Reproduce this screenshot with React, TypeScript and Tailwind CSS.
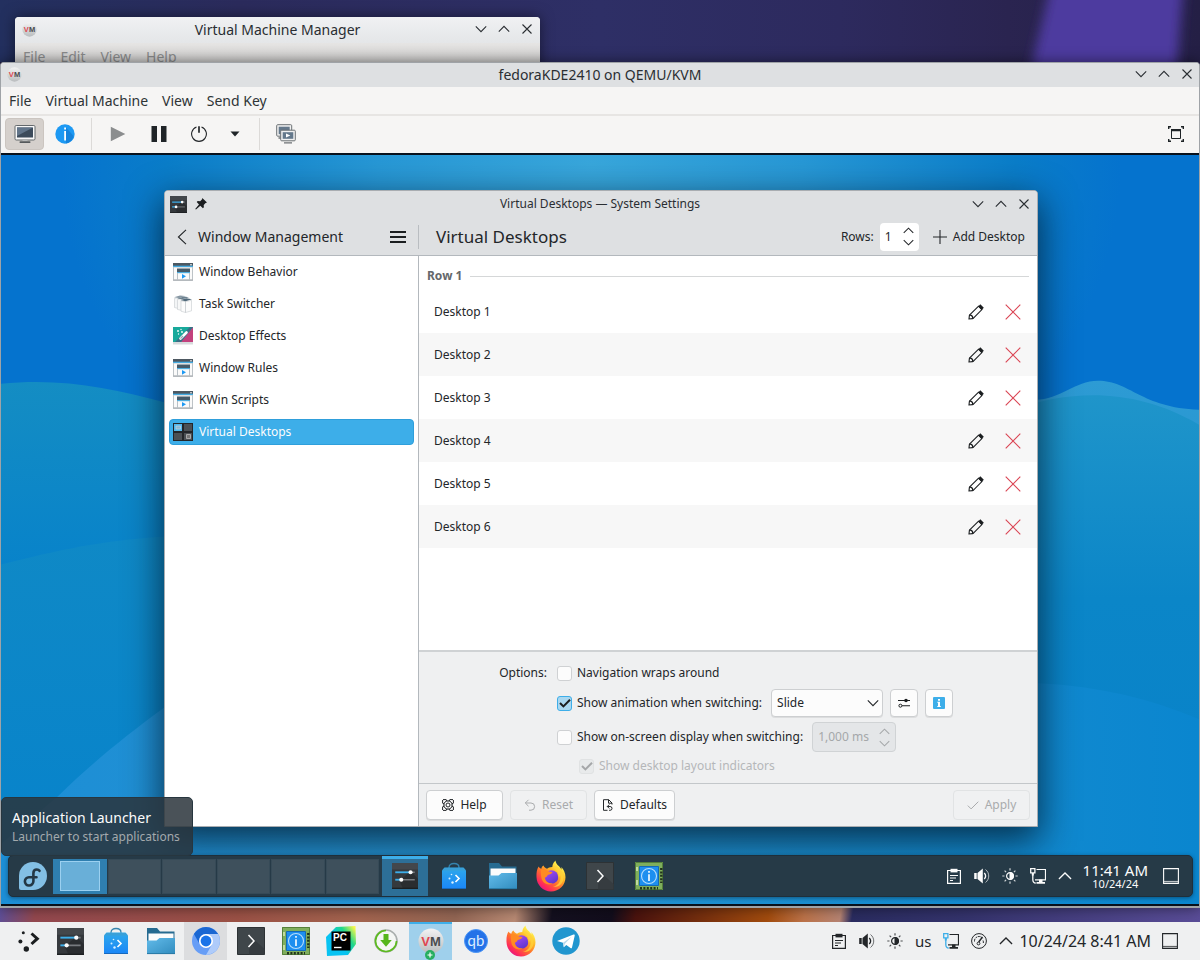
import React, { useId, useState } from "react";

type IconProps = { className?: string };

/* ---------- Window and action icons ---------- */

const Down = ({ className = "size-3" }: IconProps) => (
  <svg viewBox="0 0 12 12" className={className} fill="none" stroke="currentColor" strokeWidth="1.1" aria-hidden="true">
    <path d="M.8 3.4 6 8.6l5.2-5.2" />
  </svg>
);
const Up = ({ className = "size-3" }: IconProps) => (
  <svg viewBox="0 0 12 12" className={className} fill="none" stroke="currentColor" strokeWidth="1.1" aria-hidden="true">
    <path d="M.8 8.6 6 3.4l5.2 5.2" />
  </svg>
);
const Cross = ({ className = "size-3" }: IconProps) => (
  <svg viewBox="0 0 12 12" className={className} fill="none" stroke="currentColor" strokeWidth="1.1" aria-hidden="true">
    <path d="m1.500 1.500 9 9m0-9-9 9" />
  </svg>
);
const Back = () => (
  <svg viewBox="0 0 10 16" className="h-4 w-[10px]" fill="none" stroke="currentColor" strokeWidth="1.1" aria-hidden="true">
    <path d="M9 .8 1.400 8 9 15.200" />
  </svg>
);
const Burger = () => (
  <svg viewBox="0 0 16 14" className="h-[14px] w-4" aria-hidden="true">
    <path d="M0 2h16M0 7h16M0 12h16" stroke="currentColor" strokeWidth="1.9" />
  </svg>
);
const Plus = () => (
  <svg viewBox="0 0 14 14" className="size-[14px]" aria-hidden="true">
    <path d="M7 0v14M0 7h14" stroke="currentColor" strokeWidth="1.1" />
  </svg>
);
const Pin = () => (
  <svg viewBox="0 0 12 12" className="size-3" aria-hidden="true">
    <path d="M7.3 0 12 4.600l-1.400.300-1.900 2 .200 2.400-1 1L5.300 7.700 1 11.600l-.8-.500L4 6.500 1.700 4l1-1 2.500.200 1.900-1.900z" fill="#1b1e20" />
  </svg>
);
const Pencil = () => (
  <svg viewBox="0 0 16 16" className="size-4" aria-hidden="true">
    <path d="M10.600 2.200 1.700 10.800a1 1 0 0 0-.3.600L1 15l3.600-.4a1 1 0 0 0 .6-.3l8.700-8.700z" fill="none" stroke="#1b1e20" strokeWidth="1.100" />
    <path d="M10.200 2.400 12.300.300l3.500 3.500-2.100 2.100z" fill="#1b1e20" />
    <path d="M1.500 11.200c2.100-.4 3.600 1.200 3.200 3.300" fill="none" stroke="#1b1e20" strokeWidth="1.400" />
  </svg>
);
const Delete = () => (
  <svg viewBox="0 0 16 16" className="size-4" fill="none" stroke="#da4453" strokeWidth="1.100" aria-hidden="true">
    <path d="m.7.7 14.600 14.600m0-14.600L.7 15.300" />
  </svg>
);
const Sliders = () => (
  <svg viewBox="0 0 12 12" className="size-3" aria-hidden="true">
    <path d="M0 3.500h12M4 8.700h8" stroke="#1b1e20" strokeWidth="1.100" />
    <circle cx="8" cy="3.500" r="1.800" fill="#1b1e20" />
    <circle cx="2.400" cy="8.700" r="1.500" fill="none" stroke="#1b1e20" strokeWidth="1" />
  </svg>
);
const InfoSquare = () => (
  <svg viewBox="0 0 12 12" className="size-3" aria-hidden="true">
    <rect width="12" height="12" rx="1" fill="#3daee9" />
    <path d="M5 2h2v1.700H5zM4.300 4.800H7V9h.8v1H4.300V9H5V5.800h-.7z" fill="#fff" />
  </svg>
);
const HelpIcon = () => (
  <svg viewBox="0 0 12 12" className="size-3" fill="none" stroke="currentColor" aria-hidden="true">
    <circle cx="6" cy="6" r="4.200" />
    <circle cx="6" cy="6" r="2" />
    <path d="M1 .6h3.200L5 2.500M11 .6H7.800L7 2.500M1 11.400h3.200L5 9.500M11 11.400H7.800L7 9.500M.6 1v3.200L2.500 5M.6 11V7.800L2.500 7M11.400 1v3.200L9.500 5M11.400 11V7.800L9.500 7" />
  </svg>
);
const Undo = () => (
  <svg viewBox="0 0 12 12" className="size-3" fill="none" stroke="currentColor" aria-hidden="true">
    <path d="M4.500.8 1.300 4l3.200 3.200M1.300 4H7a3.600 3.600 0 0 1 0 7.200H5" />
  </svg>
);
const DefaultsIcon = () => (
  <svg viewBox="0 0 12 12" className="size-3" fill="none" stroke="currentColor" aria-hidden="true">
    <path d="M5.500 11.300H1.500V.7h5.200l3.300 3.300v1.500M6.500.7v3.500H10" />
    <path d="m7.300 5.500-2 2 2 2M5.300 7.500h2.800a1.900 1.900 0 0 1 0 3.800h-1" />
  </svg>
);
const Tick = ({ className = "size-3" }: IconProps) => (
  <svg viewBox="0 0 12 12" className={className} fill="none" stroke="currentColor" aria-hidden="true">
    <path d="m.8 6.600 3.300 3.300L11.300 2.700" />
  </svg>
);

/* ---------- Virtual machine toolbar icons ---------- */

const Monitor = () => (
  <svg viewBox="0 0 22 20" className="h-5 w-[22px]" aria-hidden="true">
    <rect x="1" y="1.500" width="20" height="14.500" rx="1.200" fill="#f7f7f7" stroke="#63686b" />
    <rect x="3" y="3.500" width="16" height="10" fill="#3c4b5b" />
    <path d="M3 3.500h16L3 12z" fill="#62758a" />
    <path d="M8.500 16h5v1.500h-5z" fill="#b7b9ba" />
    <rect x="5.500" y="17.300" width="11" height="1.700" rx=".8" fill="#55595c" />
  </svg>
);
const InfoCircle = () => (
  <svg viewBox="0 0 20 20" className="size-5" aria-hidden="true">
    <circle cx="10" cy="10" r="9.700" fill="#1d99f3" />
    <path d="m11 3.500 7.500 8.500A9.700 9.700 0 0 1 11 19.600z" fill="#1683dc" />
    <path d="M9.200 3.500h1.800v2H9.200zM9.200 7h1.800v9.500H9.200z" fill="#fff" />
  </svg>
);
const Play = () => (
  <svg viewBox="0 0 16 16" className="size-4" aria-hidden="true">
    <path d="M.8.8 15.300 8 .8 15.200z" fill="#8b8d8e" />
  </svg>
);
const Pause = () => (
  <svg viewBox="0 0 16 16" className="size-4" aria-hidden="true">
    <path d="M.5 0h5.500v16H.5zM10 0h5.500v16H10z" fill="#1f2427" />
  </svg>
);
const Power = () => (
  <svg viewBox="0 0 16 16" className="size-4" fill="none" stroke="#232629" aria-hidden="true">
    <path d="M5.500 1A7.400 7.400 0 1 0 10.500 1" strokeWidth="1.100" />
    <path d="M8 .2v6.500" strokeWidth="1.700" />
  </svg>
);
const Screens = () => (
  <svg viewBox="0 0 20 20" className="size-5" aria-hidden="true">
    <rect x=".7" y=".7" width="15" height="11.500" rx="1" fill="#f1f1f1" stroke="#6c7174" />
    <rect x="2.700" y="2.700" width="11" height="7.500" fill="#64788b" />
    <path d="M2.500 14h4" stroke="#6c7174" strokeWidth="1.400" />
    <rect x="4.700" y="6.200" width="14.600" height="10.600" rx="1" fill="#f1f1f1" stroke="#6c7174" />
    <rect x="6.700" y="8.200" width="10.600" height="6.600" fill="#64788b" />
    <path d="m10 9.400 4.300 2.100L10 13.600z" fill="#fff" />
    <path d="M8 18.900h8" stroke="#6c7174" strokeWidth="1.300" />
  </svg>
);
const Fullscreen = () => (
  <svg viewBox="0 0 16 16" className="size-4" fill="none" stroke="#1f2427" aria-hidden="true">
    <path d="M.7 3V.7H3M13 .7h2.300V3M15.300 13v2.300H13M3 15.300H.7V13" strokeWidth="1.400" />
    <path d="M3.500 4v8.500h9V4" />
    <path d="M3 4.200h10" strokeWidth="2.200" />
  </svg>
);

/* ---------- Sidebar icons ---------- */

const WindowRulesIcon = () => (
  <svg viewBox="0 0 20 18" className="h-[18px] w-5" aria-hidden="true">
    <path d="M.5 4h19v13.500H.5z" fill="#fafafa" stroke="#bdc3c7" />
    <path d="M0 17h20" stroke="#b0b5b9" strokeWidth="1.400" />
    <path d="M0 0h20v3.500H0z" fill="#4d5861" />
    <path d="M0 3.300h20" stroke="#3daee9" strokeWidth="1.200" />
    <circle cx="18" cy="1.700" r=".8" fill="#fff" />
    <path d="M4 5.500h13v4H4z" fill="#455a69" />
    <path d="M4 9.700h13" stroke="#3daee9" />
    <path d="M4.500 10v7M16.500 10v7" stroke="#b8c0c6" />
    <path d="m9 11 4 2.300-4 2.500z" fill="#1d99f3" />
  </svg>
);
const TaskSwitcherIcon = () => (
  <svg viewBox="0 0 20 18" className="h-[18px] w-5" aria-hidden="true">
    <path d="M1.500 3.500 7 2v12l-5.500-1.500z" fill="#f3f5f6" stroke="#c6cbce" strokeWidth=".6" />
    <path d="m1 2.300 6-1.800 5 .6-6 1.800z" fill="#8797a3" />
    <path d="M4.500 4.500 12 3v13l-7.500-1.500z" fill="#f7f8f8" stroke="#c6cbce" strokeWidth=".6" />
    <path d="m4 3.500 7-2 5 .8-7 2z" fill="#6d8290" />
    <path d="m8 5.800 4.500.8v10.900L8 16.200zM12.500 6.600l6-1.300v10.500l-6 1.700z" fill="#fcfcfc" stroke="#c6cbce" strokeWidth=".6" />
    <path d="m7.500 5 6-1.800 5.500 1-6.500 2.100z" fill="#50697a" />
  </svg>
);
const EffectsIcon = () => (
  <svg viewBox="0 0 20 18" className="h-[18px] w-5" aria-hidden="true">
    <path d="M0 0h20v15H0z" fill="#18a99b" />
    <path d="M20 0v15H8z" fill="#c3417e" />
    <path d="m17 0 3 0L8 15H2z" fill="#3a6f86" />
    <path d="M0 15h20v2.500H0z" fill="#d7dadc" />
    <path d="m7.500 11.500 6-6" stroke="#fff" strokeWidth="2.600" strokeLinecap="round" />
    <path d="m7.500 11.500 2.500-2.500" stroke="#9ab" strokeWidth="1.300" />
    <g fill="#fff">
      <circle cx="5" cy="4" r=".9" />
      <circle cx="8" cy="2.500" r=".7" />
      <circle cx="9" cy="5" r=".9" />
      <circle cx="5.500" cy="7" r=".7" />
    </g>
  </svg>
);
const DesktopsIcon = () => (
  <svg viewBox="0 0 20 18" className="h-[18px] w-5" aria-hidden="true">
    <path d="M0 0h20v18H0z" fill="#232629" />
    <path d="M1 1h8v7H1z" fill="#54b8ec" />
    <path d="M3 3h4.500v3H3z" fill="#8fb8d2" stroke="#b5d5e8" strokeWidth=".7" />
    <path d="M11 1h8v7h-8zM1 10h8v7H1zM11 10h8v7h-8z" fill="#4b5054" />
    <path d="M13.500 11.500h4v4h-4z" fill="#777" stroke="#bbb" strokeWidth=".8" />
  </svg>
);

/* ---------- Application icons ---------- */

const SettingsIcon = ({ className = "size-7" }: IconProps) => (
  <svg viewBox="0 0 28 28" className={className} aria-hidden="true">
    <path d="M0 0h28v28H0z" fill="#35393d" />
    <path d="M0 0h28v7H0z" fill="#43474b" />
    <path d="m20 9 8 8v11H12L8 19z" fill="#2a2d30" />
    <path d="M0 27.300h28" stroke="#1c1f21" strokeWidth="1.400" />
    <path d="M3.500 10h16" stroke="#3daee9" strokeWidth="2" />
    <path d="M20 10h4.500M10 18h14.500" stroke="#777b7f" strokeWidth="1.600" />
    <path d="M3.500 18h6" stroke="#3daee9" strokeWidth="2" />
    <circle cx="20" cy="10" r="2.200" fill="#fcfcfc" />
    <circle cx="10" cy="18" r="2.200" fill="#fcfcfc" />
  </svg>
);
const DiscoverIcon = () => {
  const id = useId();
  return (
    <svg viewBox="0 0 28 28" className="size-7" aria-hidden="true">
      <linearGradient id={id} x1="0" x2="0" y1="0" y2="1">
        <stop stopColor="#2fa9ea" />
        <stop offset="1" stopColor="#1a86f8" />
      </linearGradient>
      <path d="M9 8V5.500C9 3 11 1.500 14 1.500s5 1.500 5 4V8" fill="none" stroke="#3584ae" strokeWidth="1.300" />
      <path d="M4.500 5.500h19L26 8.500V27H2V8.500z" fill={`url(#${id})`} />
      <path d="M2 8.500 4.500 6h19L26 8.500z" fill="#39a0d8" />
      <path d="M2 26.500h24" stroke="#1769bd" />
      <path d="m15.500 13 3.500 3.500-3.500 3.500" fill="none" stroke="#fff" strokeWidth="1.600" />
      <g fill="#d7f0ff">
        <circle cx="9.500" cy="16.500" r="1" />
        <circle cx="12.500" cy="20.500" r="1.200" />
        <circle cx="11.500" cy="12.500" r=".8" />
      </g>
    </svg>
  );
};
const FolderIcon = () => {
  const id = useId();
  return (
    <svg viewBox="0 0 28 28" className="size-7" aria-hidden="true">
      <linearGradient id={id} x1="0" x2="1" y1="0" y2="1">
        <stop stopColor="#62bbea" />
        <stop offset="1" stopColor="#318cbe" />
      </linearGradient>
      <path d="M0 1h10l3 3.500h14.500V16H0z" fill="#266b91" />
      <path d="M1.500 6.500h25V15h-25z" fill="#fcfcfc" />
      <path d="M0 13.500h9.500l3-2.500H28v16H0z" fill={`url(#${id})`} />
      <path d="M0 26.600h28" stroke="#297aa5" />
    </svg>
  );
};
const TerminalIcon = () => (
  <svg viewBox="0 0 28 28" className="size-7" aria-hidden="true">
    <path d="M.5.5h27v27H.5z" fill="#3f464a" stroke="#2d3235" />
    <path d="m12 8 15.500 14v5.500H12V20l5-6z" fill="#363c40" />
    <path d="m11.500 8 5.500 6-5.500 6" fill="none" stroke="#fcfcfc" strokeWidth="1.500" />
  </svg>
);
const ChipIcon = () => (
  <svg viewBox="0 0 28 28" className="size-7" aria-hidden="true">
    <path d="M0 0h28v28H0z" fill="#7fae5d" />
    <path d="M.5.5h27v27H.5z" fill="none" stroke="#55803a" />
    <path d="M26.300 6v15M5 26.300h18" stroke="#22331c" strokeWidth="2.400" strokeDasharray="2 1.400" />
    <path d="M2 5v4M2 18v5" stroke="#d9e8b8" strokeWidth="1.500" />
    <path d="M4.500 4.500h19v19h-19z" fill="#1d8ff0" stroke="#1569b6" />
    <circle cx="14" cy="14" r="7.500" fill="none" stroke="#b6ddfb" strokeWidth="1.100" />
    <path d="M13.200 9h1.600v1.800h-1.600zM13.200 12.200h1.600v6.800h-1.600z" fill="#fff" />
  </svg>
);
const FirefoxIcon = () => {
  const id = useId();
  return (
    <svg viewBox="0 0 30 32" className="h-8 w-[30px]" aria-hidden="true">
      <linearGradient id={id + "a"} x1=".85" x2=".2" y1=".1" y2=".95">
        <stop offset=".05" stopColor="#fff44f" />
        <stop offset=".35" stopColor="#ffb325" />
        <stop offset=".6" stopColor="#ff6c2f" />
        <stop offset=".85" stopColor="#ff2c58" />
        <stop offset="1" stopColor="#e31587" />
      </linearGradient>
      <linearGradient id={id + "b"} x1=".2" x2=".8" y1="0" y2="1">
        <stop stopColor="#a64af5" />
        <stop offset="1" stopColor="#5b35c9" />
      </linearGradient>
      <path d="M19.500.5c-2.500 2-3.200 5-3.200 6.500-2.500.2-4 .8-5.200 1.800C9.500 8.300 8.200 7.200 7.500 5.500 5.800 6.500 5.400 8 5.400 8.800 3.500 8.600 2.600 6.500 2.600 6.500.8 9 .3 13 .5 17 .7 25 7 31.500 15 31.500c8.300 0 14.500-6.500 14.500-14.200 0-4.300-1.700-7.600-4.300-10.200.3 1 .3 2.200.3 2.700C24.200 6 19.800 5 19.500.5z" fill={`url(#${id}a)`} />
      <circle cx="15.500" cy="17" r="6.800" fill={`url(#${id}b)`} />
      <path d="M5.500 9c2.500 0 4.500.5 6 1.500 1 1.500 3.500 1 5 1.700-.5 1.800-3 2-4.200 2.500-1.300.6-1 2.300-3.500 3 .8 4.300 4.500 6.300 8 5.500-4 2.800-10 .5-11.300-5C4.800 14.500 4.500 11 5.500 9z" fill="#ff8b22" />
      <path d="M17 7.500c4 1.500 6.500 6 5.300 10.500 1.200-1 1.700-2.500 1.700-3.500 2 5-1 11-7 12.500 7 .5 10.500-4.500 10.500-9.500 0-5.500-4.500-9.500-7-11z" fill="#ffd23a" opacity=".8" />
    </svg>
  );
};
const ChromiumIcon = () => (
  <svg viewBox="0 0 28 28" className="size-7" aria-hidden="true">
    <circle cx="14" cy="14" r="14" fill="#669df6" />
    <path d="M14 7h12.100A14 14 0 0 1 14 28l6-10.500z" fill="#aecbfa" />
    <path d="M1.900 7A14 14 0 0 1 26.100 7H14a7 7 0 0 0-6.100 10.500z" fill="#1a67d2" />
    <circle cx="14" cy="14" r="7" fill="#fff" />
    <circle cx="14" cy="14" r="5.400" fill="#1a73e8" />
  </svg>
);
const PyCharmIcon = () => {
  const id = useId();
  return (
    <svg viewBox="0 0 30 30" className="size-[30px]" aria-hidden="true">
      <linearGradient id={id} x1="0" x2="1" y1=".7" y2="0">
        <stop offset=".35" stopColor="#07c3f2" />
        <stop offset=".65" stopColor="#21d789" />
        <stop offset=".95" stopColor="#fcf84a" />
      </linearGradient>
      <path d="M10 1 29.500 0 30 18l-8 11L1 30 0 11z" fill={`url(#${id})`} />
      <path d="M5.500 5.500h19v19h-19z" fill="#000" />
      <text x="7" y="15" fill="#fff" fontFamily="Liberation Sans, sans-serif" fontWeight="700" fontSize="10">PC</text>
      <path d="M8 20.800h7.500v1.400H8z" fill="#fff" />
    </svg>
  );
};
const DownloadIcon = () => (
  <svg viewBox="0 0 24 24" className="size-6" aria-hidden="true">
    <circle cx="12" cy="12" r="11" fill="#f4f6f4" stroke="#a9aead" strokeWidth="1.600" />
    <path d="M12 1.500A10.500 10.500 0 1 0 22.500 12" fill="none" stroke="#5cbb1f" strokeWidth="1.700" />
    <path d="M9.500 5h5v6h3.300L12 17.800 6.200 11h3.300z" fill="#55b51c" />
  </svg>
);
const VmmIcon = ({ className = "size-4" }: IconProps) => {
  const id = useId();
  return (
    <svg viewBox="0 0 26 26" className={className} aria-hidden="true">
      <linearGradient id={id} x1="0" x2="0" y1="0" y2="1">
        <stop stopColor="#f3f3f3" />
        <stop offset="1" stopColor="#b9bcbe" />
      </linearGradient>
      <circle cx="13" cy="13" r="12.500" fill={`url(#${id})`} />
      <text x="13" y="17.500" textAnchor="middle" fontFamily="Liberation Sans, sans-serif" fontWeight="700" fontSize="13">
        <tspan fill="#e0454f">V</tspan>
        <tspan fill="#4a4c4e">M</tspan>
      </text>
    </svg>
  );
};
const QbIcon = () => (
  <svg viewBox="0 0 24 24" className="size-6" aria-hidden="true">
    <circle cx="12" cy="12" r="11.500" fill="#2472e8" stroke="#4d97f5" />
    <text x="12" y="16.500" textAnchor="middle" fill="#dcecff" fontFamily="Lato, Noto Sans, sans-serif" fontSize="15">qb</text>
  </svg>
);
const TelegramIcon = () => (
  <svg viewBox="0 0 28 28" className="size-7" aria-hidden="true">
    <circle cx="14" cy="14" r="13.700" fill="#2196cf" />
    <path d="M5 14 21.500 7.500c.8-.3 1.400.2 1.200 1.200L20 20.500c-.2.900-.8 1-1.500.6L14.300 18l-2.500 2.300-.8-4.500z" fill="#fff" />
    <path d="m11 15.800 8.500-6.100-6.600 7-1.100 3.600z" fill="#b9d9ec" />
  </svg>
);
const FedoraIcon = () => (
  <svg viewBox="0 0 28 28" className="size-7" aria-hidden="true">
    <path d="M14 0a14 14 0 1 1 0 28H2a2 2 0 0 1-2-2V14A14 14 0 0 1 14 0z" fill="#83bfe4" />
    <path d="M20.500 8.800c-.6-.9-1.500-1.300-2.600-1.300-2.200 0-3.500 1.500-3.500 3.700v8a4.300 4.300 0 0 1-4.400 4.300 4 4 0 0 1-4.100-4.200 4 4 0 0 1 4.100-4h7.500" fill="none" stroke="#243744" strokeWidth="2.600" strokeLinecap="round" />
  </svg>
);
const PlasmaIcon = () => (
  <svg viewBox="0 0 22 22" className="size-[22px]" aria-hidden="true">
    <path d="m13.500 3.500 5.800 5.200-5.800 5.300" fill="none" stroke="#1b1e20" strokeWidth="3" />
    <circle cx="5.300" cy="2.800" r="1.500" fill="#1b1e20" />
    <circle cx="2.400" cy="11.500" r="2" fill="#1b1e20" />
    <circle cx="8.300" cy="19" r="2.700" fill="#1b1e20" />
  </svg>
);

/* ---------- Tray icons ---------- */

const Clipboard = () => (
  <svg viewBox="0 0 16 16" className="size-4" fill="none" stroke="currentColor" aria-hidden="true">
    <path d="M1.600 2.500h12.800v12.800H1.600z" strokeWidth="1.200" />
    <path d="M4.500 2.600h7" strokeWidth="3.600" />
    <path d="M4 7.500h8M4 10h6M4 12.500h3" strokeWidth="1.200" />
  </svg>
);
const Volume = () => (
  <svg viewBox="0 0 16 16" className="size-4" fill="none" stroke="currentColor" aria-hidden="true">
    <path d="M.2 5h2.500v6H.2zM3.500 5 8.800.5v15L3.500 11z" fill="currentColor" stroke="none" />
    <path d="M10.300 5c1.600 1.800 1.600 4.200 0 6" strokeWidth="1.300" />
    <path d="M11.500 1.500c4.300 3.300 4.300 9.700 0 13" opacity=".65" />
  </svg>
);
const Brightness = () => (
  <svg viewBox="0 0 16 16" className="size-4" fill="none" stroke="currentColor" aria-hidden="true">
    <circle cx="8" cy="8" r="3.400" strokeWidth="1.200" />
    <path d="M8 4.600a3.400 3.400 0 0 1 0 6.800z" fill="currentColor" />
    <path d="M8 .3v2.200M8 13.500v2.200M.3 8h2.200M13.500 8h2.200M2.600 2.600l1.500 1.500M11.900 11.900l1.500 1.500M13.400 2.600l-1.500 1.500M4.100 11.900l-1.500 1.500" strokeWidth="1.200" opacity=".8" />
  </svg>
);
const Network = ({ accent }: { accent: string }) => (
  <svg viewBox="0 0 16 16" className="size-4" fill="none" stroke="currentColor" aria-hidden="true">
    <path d="M6.500 1.500h9v10.300H5" strokeWidth="1.200" />
    <path d="M9 11.500h3.500V14H15v1.700H6.500V14H9z" fill="currentColor" stroke="none" />
    <path d="M.7.7h4.200v4.200H.7zM2.800 5v6.500c0 2 1 3.500 3 3.700" stroke={accent} strokeWidth="1.300" />
    <path d="M2.800 7.500V5" stroke={accent} strokeWidth="2" />
  </svg>
);
const Gauge = () => (
  <svg viewBox="0 0 16 16" className="size-4" fill="none" stroke="currentColor" aria-hidden="true">
    <circle cx="8" cy="8" r="7.400" />
    <path d="M3.500 8.500a4.500 4.500 0 0 1 8-3.300M12 7.500c.5 1 .5 1.800.3 2.500" strokeDasharray="2.500 .8" />
    <path d="m11.500 4-3.800 5" strokeWidth="1.400" />
    <circle cx="7.500" cy="10.500" r="1.400" />
  </svg>
);
const ShowDesktop = () => (
  <svg viewBox="0 0 16 16" className="size-4" fill="none" stroke="currentColor" aria-hidden="true">
    <path d="M.6.6h14.800v14.800H.6z" strokeWidth="1.100" />
    <path d="M1 13.500h14" strokeWidth="1.200" opacity=".7" />
  </svg>
);

/* ---------- Windows ---------- */

function TitleBar({ title, left, className }: { title: string; left: React.ReactNode; className: string }) {
  return (
    <header className={"grid shrink-0 grid-cols-[1fr_auto_1fr] items-center text-[#2a2e32] " + className}>
      <div className="flex items-center gap-2">{left}</div>
      <h1 className="whitespace-nowrap">{title}</h1>
      <div className="flex items-center justify-end gap-[11px]">
        <button type="button" aria-label="Minimize"><Down /></button>
        <button type="button" aria-label="Maximize"><Up /></button>
        <button type="button" aria-label="Close"><Cross /></button>
      </div>
    </header>
  );
}

function ManagerWindow() {
  return (
    <section className="absolute left-[15px] top-[17px] h-[60px] w-[525px] overflow-hidden rounded-t bg-[#e6e4e2] shadow-[0_0_14px_rgba(0,0,0,0.5)]">
      <TitleBar title="Virtual Machine Manager" left={<VmmIcon className="size-[15px]" />} className="h-[26px] bg-linear-to-b from-[#f0f1f3] to-[#e4e6e8] px-[7px] pb-[2px] text-[14px]" />
      <nav className="flex gap-[15px] bg-linear-to-b from-[#e6e5e4] to-[#b4b3b2] px-2 pb-4 pt-1 text-[14px] leading-5 text-[#8a8b8c]">
        {["File", "Edit", "View", "Help"].map((m) => (
          <button type="button" key={m}>{m}</button>
        ))}
      </nav>
    </section>
  );
}

function MachineToolbar() {
  return (
    <div className="flex h-[39px] shrink-0 items-center border-t-2 border-[#e7e5e3] bg-[#f6f5f4] pb-[2px] pl-1 pr-[15px]">
      <button type="button" aria-label="Console" aria-pressed="true" className="flex h-8 w-[39px] items-center justify-center rounded border border-[#cbc5c0] bg-[#d5d0cc]"><Monitor /></button>
      <button type="button" aria-label="Details" className="flex w-[41px] justify-center"><InfoCircle /></button>
      <span className="ml-[6px] h-8 w-px bg-[#dcdad8]" />
      <button type="button" aria-label="Run" className="ml-[6px] flex w-10 justify-center"><Play /></button>
      <button type="button" aria-label="Pause" className="flex w-[41px] justify-center"><Pause /></button>
      <button type="button" aria-label="Shut down" className="flex w-10 justify-center"><Power /></button>
      <button type="button" aria-label="Shut down options" className="flex w-8 justify-center">
        <svg viewBox="0 0 10 6" className="h-[6px] w-[10px]" aria-hidden="true"><path d="M.5.5h9L5 5.500z" fill="#1f2427" /></svg>
      </button>
      <span className="ml-2 h-8 w-px bg-[#dcdad8]" />
      <button type="button" aria-label="Manage snapshots" className="ml-[6px] flex w-10 justify-center"><Screens /></button>
      <button type="button" aria-label="Full screen" className="ml-auto"><Fullscreen /></button>
    </div>
  );
}

function GuestWallpaper() {
  return (
    <svg viewBox="0 0 1198 750" preserveAspectRatio="none" className="absolute inset-0 size-full" aria-hidden="true">
      <defs>
        <radialGradient id="glow" gradientUnits="userSpaceOnUse" cx="0" cy="0" r="1" gradientTransform="translate(590 10) scale(530 420)">
          <stop stopColor="#38a7dc" />
          <stop offset=".4" stopColor="#2798d6" />
          <stop offset=".8" stopColor="#0a7dc9" />
          <stop offset="1" stopColor="#0573ce" />
        </radialGradient>
        <linearGradient id="hillLeft" x1="0" x2="0" y1="0" y2="1">
          <stop stopColor="#148dc3" />
          <stop offset=".35" stopColor="#0883ca" />
          <stop offset="1" stopColor="#0681cd" />
        </linearGradient>
        <linearGradient id="hillBack" x1="0" x2="0" y1="0" y2="1">
          <stop stopColor="#2d9bd4" />
          <stop offset="1" stopColor="#1f8fcd" />
        </linearGradient>
        <linearGradient id="hillMid" x1="0" x2="0" y1="0" y2="1">
          <stop stopColor="#1f95ca" />
          <stop offset=".4" stopColor="#0b86c8" />
          <stop offset="1" stopColor="#0780ca" />
        </linearGradient>
        <linearGradient id="hillLow" x1="0" x2="0" y1="0" y2="1">
          <stop stopColor="#0f89c6" />
          <stop offset="1" stopColor="#0682cc" />
        </linearGradient>
        <linearGradient id="hillFront" x1="0" x2="1" y1="0" y2="0">
          <stop stopColor="#1c8ed6" />
          <stop offset=".4" stopColor="#2793d0" />
          <stop offset="1" stopColor="#0a86cf" />
        </linearGradient>
      </defs>
      <path d="M0 0h1198v750H0z" fill="url(#glow)" />
      <path d="M0 229C60 223 110 233 165 248L600 320V750H0z" fill="url(#hillLeft)" />
      <path d="M600 235H1000C1050 262 1065 226 1097 226S1140 253 1198 255V450H600z" fill="url(#hillBack)" />
      <path d="M600 260H1000C1060 235 1130 230 1198 270V750H600z" fill="url(#hillMid)" />
      <path d="M0 410C60 395 100 386 165 382H400V750H0z" fill="url(#hillLow)" />
      <path d="M57 642C90 610 120 585 165 552L500 520H900L1037 529C1100 532 1150 545 1198 565V750H0V690z" fill="url(#hillFront)" />
    </svg>
  );
}

const modules = [
  { name: "Window Behavior", icon: <WindowRulesIcon /> },
  { name: "Task Switcher", icon: <TaskSwitcherIcon /> },
  { name: "Desktop Effects", icon: <EffectsIcon /> },
  { name: "Window Rules", icon: <WindowRulesIcon /> },
  { name: "KWin Scripts", icon: <WindowRulesIcon /> },
  { name: "Virtual Desktops", icon: <DesktopsIcon /> },
];

function CheckBox({ label, defaultChecked = false, disabled = false }: { label: string; defaultChecked?: boolean; disabled?: boolean }) {
  return (
    <label className={"flex items-center gap-[5px] whitespace-nowrap " + (disabled ? "text-[#b5b7b9]" : "")}>
      <span className="grid size-[15px] place-items-center">
        <input
          type="checkbox"
          defaultChecked={defaultChecked}
          disabled={disabled}
          className="peer col-start-1 row-start-1 size-[15px] appearance-none rounded-[3px] border border-[#cfd1d3] bg-[#fcfcfc] checked:border-[#3daee9] checked:bg-[#a9d7f0] disabled:border-[#e0e2e3] disabled:bg-[#e8eaeb]"
        />
        <svg viewBox="0 0 12 12" className="pointer-events-none col-start-1 row-start-1 hidden size-3 peer-checked:block" fill="none" stroke={disabled ? "#a5a7a9" : "#1b1e20"} strokeWidth="2" aria-hidden="true">
          <path d="m1 6 3.400 3.400L11 2.700" />
        </svg>
      </span>
      {label}
    </label>
  );
}

function SpinArrows({ disabled = false }: { disabled?: boolean }) {
  return (
    <span className="flex flex-col gap-[1px]">
      <button type="button" aria-label="Increase" disabled={disabled}><Up className="size-[11px]" /></button>
      <button type="button" aria-label="Decrease" disabled={disabled}><Down className="size-[11px]" /></button>
    </span>
  );
}

const squareButton = "flex h-7 w-7 items-center justify-center rounded border border-[#cdcfd1] bg-[#fcfcfc] shadow-[0_1px_0_rgba(0,0,0,0.08)]";
const pushButton = "flex h-[30px] items-center justify-center gap-[6px] rounded border";
const enabledButton = " border-[#cdcfd1] bg-[#fcfcfc] shadow-[0_1px_0_rgba(0,0,0,0.08)]";
const disabledButton = " border-[#e1e3e4] bg-[#f0f1f2] text-[#a9abad]";

function SettingsWindow() {
  const [rows, setRows] = useState("1");
  return (
    <section className="absolute bottom-[77px] left-[163px] right-[161px] top-[35px] flex flex-col overflow-hidden rounded-t border border-[#a9adb1] bg-[#eff0f1] text-[12px] leading-[18px] text-[#232629] shadow-[0_12px_36px_2px_rgba(0,20,35,0.75)]">
      <TitleBar
        title="Virtual Desktops — System Settings"
        left={<><SettingsIcon className="size-[17px]" /><Pin /></>}
        className="h-[26px] bg-[#dee0e2] pl-[5px] pr-[7px]"
      />
      <div className="flex h-[39px] shrink-0 items-center border-b border-[#b3b8bd] bg-[#dee0e2] pt-px">
        <div className="flex h-6 w-[254px] items-center border-r border-[#b9bdc1] pl-3 pr-3">
          <button type="button" className="flex items-center gap-[11px] text-[14px]"><Back />Window Management</button>
          <button type="button" aria-label="Menu" className="ml-auto text-[#1b1e20]"><Burger /></button>
        </div>
        <h2 className="pl-[17px] text-[17px]">Virtual Desktops</h2>
        <label htmlFor="rows" className="ml-auto mr-[6px]">Rows:</label>
        <span className="flex h-7 w-[39px] items-center rounded bg-white pl-[5px] pr-1">
          <input id="rows" value={rows} onChange={(e) => setRows(e.target.value)} className="w-[18px] bg-transparent outline-none" />
          <SpinArrows />
        </span>
        <button type="button" className="ml-[14px] mr-3 flex items-center gap-[6px]"><Plus />Add Desktop</button>
      </div>
      <div className="flex min-h-0 flex-1">
        <nav className="flex w-[254px] shrink-0 flex-col gap-[6px] border-r border-[#b3b8bd] bg-white px-1 pt-[3px]">
          {modules.map((m) => {
            const active = m.name === "Virtual Desktops";
            return (
              <a key={m.name} href={"#" + m.name} className={"flex h-[26px] items-center gap-[6px] rounded border px-[3px] " + (active ? "border-[#2f9fdb] bg-[#3daee9] text-[#fcfcfc]" : "border-transparent")}>
                {m.icon}
                {m.name}
              </a>
            );
          })}
        </nav>
        <div className="flex min-w-0 flex-1 flex-col">
          <div className="flex-1 bg-white">
            <h3 className="flex h-[34px] items-center gap-2 px-2 pt-[6px] font-bold text-[#65686b]">
              Row 1
              <span className="h-px flex-1 bg-[#d5d7d8]" />
            </h3>
            <ul>
              {[1, 2, 3, 4, 5, 6].map((n) => (
                <li key={n} className="flex h-[43px] items-center pl-[15px] pr-2 even:bg-[#f7f7f7]">
                  Desktop {n}
                  <button type="button" aria-label={"Rename Desktop " + n} className="ml-auto flex h-8 w-8 items-center justify-center"><Pencil /></button>
                  <button type="button" aria-label={"Remove Desktop " + n} className="ml-[5px] flex h-8 w-8 items-center justify-center"><Delete /></button>
                </li>
              ))}
            </ul>
          </div>
          <div className="grid h-[133px] grid-cols-[128px_1fr] content-start items-center gap-x-[10px] gap-y-[5px] border-t-2 border-[#cfd2d4] pt-[11px]">
            <span className="text-right">Options:</span>
            <div className="flex h-5 items-center"><CheckBox label="Navigation wraps around" /></div>
            <div className="col-start-2 flex h-[30px] items-center">
              <CheckBox label="Show animation when switching:" defaultChecked />
              <span className="relative ml-[9px] mr-[7px]">
                <select aria-label="Animation" className="h-7 w-[112px] appearance-none rounded border border-[#cdcfd1] bg-[#fcfcfc] pl-[5px] shadow-[0_1px_0_rgba(0,0,0,0.08)]">
                  <option>Slide</option>
                  <option>Fade Desktop</option>
                </select>
                <Down className="pointer-events-none absolute right-1 top-2 size-3" />
              </span>
              <button type="button" aria-label="Configure animation" className={squareButton}><Sliders /></button>
              <button type="button" aria-label="About animation" className={squareButton + " ml-[7px]"}><InfoSquare /></button>
            </div>
            <div className="col-start-2 flex h-7 items-center">
              <CheckBox label="Show on-screen display when switching:" />
              <span className="ml-[9px] flex h-[30px] w-[84px] items-center justify-between rounded border border-[#d0d3d5] bg-[#e4e6e8] px-[5px] text-[#a5a8aa]">
                <input aria-label="Display duration" disabled defaultValue="1,000 ms" className="w-[60px] bg-transparent" />
                <SpinArrows disabled />
              </span>
            </div>
            <div className="col-start-2 flex h-5 items-center pl-[22px]"><CheckBox label="Show desktop layout indicators" defaultChecked disabled /></div>
          </div>
          <div className="flex h-[43px] items-center gap-[7px] border-t border-[#c3c7ca] px-[7px]">
            <button type="button" className={pushButton + " w-[77px]" + enabledButton}><HelpIcon />Help</button>
            <button type="button" disabled className={pushButton + " w-[77px]" + disabledButton}><Undo />Reset</button>
            <button type="button" className={pushButton + " w-[81px]" + enabledButton}><DefaultsIcon />Defaults</button>
            <button type="button" disabled className={pushButton + " ml-auto w-[77px]" + disabledButton}><Tick />Apply</button>
          </div>
        </div>
      </div>
    </section>
  );
}

function GuestPanel() {
  const tasks = [
    { name: "Discover", icon: <DiscoverIcon /> },
    { name: "Files", icon: <FolderIcon /> },
    { name: "Firefox", icon: <FirefoxIcon /> },
    { name: "Konsole", icon: <TerminalIcon /> },
    { name: "Info Center", icon: <ChipIcon /> },
  ];
  return (
    <footer className="absolute bottom-[7px] left-[7px] right-[6px] flex h-[42px] items-center rounded-[5px] border border-[#1e2f3b] bg-[#263a47] pl-[10px] pr-[13px] text-[#fcfcfc] shadow-[0_1px_4px_rgba(0,0,0,0.4)]">
      <button type="button" aria-label="Application Launcher"><FedoraIcon /></button>
      <div className="ml-[6px] grid h-[35px] w-[326px] grid-cols-6 gap-px">
        <button type="button" aria-label="Switch to Desktop 1" className="flex items-center justify-center bg-[#2f7fb0]">
          <span className="h-[30px] w-10 border border-[#9bd0f0] bg-[#69afd8]" />
        </button>
        {[2, 3, 4, 5, 6].map((n) => (
          <button type="button" key={n} aria-label={"Switch to Desktop " + n} className="border border-[#364a57] bg-[#3e505c]" />
        ))}
      </div>
      <div className="ml-[3px] flex h-[40px] w-[290px] items-center justify-between">
        <button type="button" aria-label="System Settings" className="flex h-full w-[46px] items-center justify-center border-t-[3px] border-[#3daee9] bg-[#2d6f97] pb-[3px]"><SettingsIcon className="size-[26px]" /></button>
        {tasks.map((t) => (
          <button type="button" key={t.name} aria-label={t.name} className="flex w-[46px] items-center justify-center">{t.icon}</button>
        ))}
      </div>
      <div className="ml-auto flex items-center gap-3">
        <Clipboard /><Volume /><Brightness /><Network accent="currentColor" />
        <Up className="size-[14px]" />
      </div>
      <div className="ml-[11px] mr-[15px] text-center">
        <p className="text-[15px] leading-[16px]">11:41 AM</p>
        <p className="text-[11px] leading-[12px]">10/24/24</p>
      </div>
      <ShowDesktop />
    </footer>
  );
}

function MachineWindow() {
  return (
    <section className="absolute inset-x-0 bottom-[14px] top-[62px] flex flex-col overflow-hidden rounded-t border-x border-b-2 border-t border-[#9fa3a7] bg-[#f6f5f4] shadow-[0_0_14px_rgba(0,0,0,0.5)]">
      <TitleBar title="fedoraKDE2410 on QEMU/KVM" left={<VmmIcon className="size-[15px]" />} className="h-[24px] bg-[#dee0e2] px-[6px] pb-[2px] text-[14px]" />
      <nav className="flex h-[27px] shrink-0 items-center gap-[14px] px-2 text-[14px] text-[#2e3436]">
        {["File", "Virtual Machine", "View", "Send Key"].map((m) => (
          <button type="button" key={m}>{m}</button>
        ))}
      </nav>
      <MachineToolbar />
      <div className="relative min-h-0 flex-1 overflow-hidden border-y-2 border-[#08111c]">
        <GuestWallpaper />
        <SettingsWindow />
        <GuestPanel />
        <div role="tooltip" className="absolute bottom-[48px] left-0 rounded-[5px] border border-[#27363f] bg-[#2a343b]/85 pb-[9px] pl-[10px] pr-3 pt-[10px] text-[#fcfcfc]">
          <p className="text-[14px] leading-5">Application Launcher</p>
          <p className="text-[12px] leading-[18px] text-[#a3a9ad]">Launcher to start applications</p>
        </div>
      </div>
    </section>
  );
}

function HostWallpaper() {
  return (
    <svg viewBox="0 0 1200 62" preserveAspectRatio="none" className="absolute inset-x-0 top-0 h-[62px] w-full" aria-hidden="true">
      <defs>
        <linearGradient id="night" x1="0" x2="1" y1="0" y2="0">
          <stop stopColor="#23305f" />
          <stop offset=".2" stopColor="#2b2b5c" />
          <stop offset=".5" stopColor="#2e2f66" />
          <stop offset=".7" stopColor="#2d2a5e" />
          <stop offset=".84" stopColor="#2a2450" />
          <stop offset="1" stopColor="#241f45" />
        </linearGradient>
        <filter id="soft" x="-20%" y="-50%" width="140%" height="200%">
          <feGaussianBlur stdDeviation="6 2" />
        </filter>
      </defs>
      <path d="M0 0h1200v62H0z" fill="url(#night)" />
      <path d="M1052-20h132l-8 102H1028z" fill="#4d3b9f" filter="url(#soft)" />
    </svg>
  );
}

function HostPanel() {
  const before = [
    { name: "System Settings", icon: <SettingsIcon className="size-[27px]" />, open: false },
    { name: "Discover", icon: <DiscoverIcon />, open: false },
    { name: "Files", icon: <FolderIcon />, open: false },
    { name: "Chromium", icon: <ChromiumIcon />, open: true },
    { name: "Konsole", icon: <TerminalIcon />, open: false },
    { name: "Info Center", icon: <ChipIcon />, open: false },
    { name: "PyCharm", icon: <PyCharmIcon />, open: false },
    { name: "Downloads", icon: <DownloadIcon />, open: false },
  ];
  const after = [
    { name: "qBittorrent", icon: <QbIcon /> },
    { name: "Firefox", icon: <FirefoxIcon /> },
    { name: "Telegram", icon: <TelegramIcon /> },
  ];
  return (
    <footer className="flex h-[38px] shrink-0 items-center bg-[#eff0f1] pl-[18px] pr-[22px] text-[#232629]">
      <button type="button" aria-label="Application Launcher" className="mr-[9px]"><PlasmaIcon /></button>
      <div className="flex h-full items-center gap-[2px]">
        {before.map((t) => (
          <button type="button" key={t.name} aria-label={t.name} className={"flex h-full w-[43px] items-center justify-center " + (t.open ? "bg-[#dcdddf]" : "")}>{t.icon}</button>
        ))}
        <button type="button" aria-label="Virtual Machine Manager" className="relative flex h-full w-[43px] items-center justify-center border-t-2 border-[#3daee9] bg-[#9fd0ec] pb-[2px]">
          <VmmIcon className="size-[26px]" />
          <svg viewBox="0 0 10 10" className="absolute bottom-0 left-[16px] size-[10px]" aria-hidden="true">
            <circle cx="5" cy="5" r="5" fill="#27ae60" />
            <path d="M5 2.500v5M2.500 5h5" stroke="#fff" strokeWidth="1.200" />
          </svg>
        </button>
        {after.map((t) => (
          <button type="button" key={t.name} aria-label={t.name} className="flex w-[43px] items-center justify-center">{t.icon}</button>
        ))}
      </div>
      <div className="ml-auto flex items-center gap-3 text-[#232629]">
        <Clipboard /><Volume /><Brightness />
        <span className="text-[15px] leading-5">us</span>
        <Network accent="#3daee9" /><Gauge />
        <Up className="size-[14px]" />
      </div>
      <time className="ml-[6px] mr-[11px] text-[16px] leading-5">10/24/24 8:41 AM</time>
      <ShowDesktop />
    </footer>
  );
}

export default function App() {
  return (
    <main className="flex h-screen flex-col overflow-hidden font-['Noto_Sans',sans-serif]">
      <div className="relative min-h-0 flex-1 overflow-hidden bg-[#241f45]">
        <HostWallpaper />
        <div className="absolute inset-x-0 bottom-0 h-[15px] bg-[linear-gradient(100deg,#5d4f9a_0%,#94484f_3%,#9c5246_20%,#a4644f_30%,#936654_38%,#b98a74_43%,#14101f_46%,#120d1c_51%,#4b130e_53%,#a34c0e_64%,#bd7349_67%,#b78473_70%,#2a2c60_71%,#34336c_80%,#5a4d98_100%)]" />
        <ManagerWindow />
        <MachineWindow />
      </div>
      <HostPanel />
    </main>
  );
}
